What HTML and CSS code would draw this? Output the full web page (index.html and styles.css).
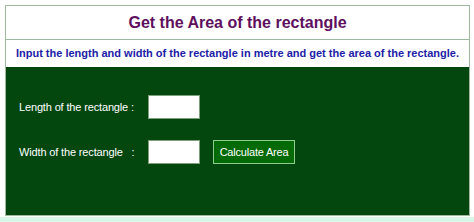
FILE: index.html
```html
<!DOCTYPE html>
<html lang="en">
<head>
    <meta charset="UTF-8">
    <title>Area of the rectangle</title>
    <link rel="stylesheet" href="styles.css">
</head>
<body>
    <div class="wrap">
        <div class="box">
            <h1 class="title">Get the Area of the rectangle</h1>
            <p class="intro">Input the length and width of the rectangle in metre and get the area of the rectangle.</p>
            <div class="panel">
                <div class="row">
                    <label class="lbl" for="len">Length of the rectangle :</label>
                    <input type="text" id="len">
                </div>
                <div class="row">
                    <label class="lbl" for="wid">Width of the rectangle &nbsp;&nbsp;:</label>
                    <input type="text" id="wid">
                    <button class="calc">Calculate Area</button>
                </div>
            </div>
        </div>
    </div>
    <div class="foot"></div>
</body>
</html>
```

FILE: styles.css
```css
body { margin: 0; font-family: "Liberation Sans", Arial, sans-serif; background: #fff; }
.wrap { padding: 5px 4px 0 5px; }
.box { border: 1px solid #9fb99f; background: #fff; }
.title { margin: 0; height: 33px; line-height: 33px; text-align: center; font-size: 16px; font-weight: bold; color: #5e0f5e; border-bottom: 1px solid #9fb99f; }
.intro { margin: 0; height: 27px; line-height: 27px; text-align: center; font-size: 11px; font-weight: bold; color: #2121a8; white-space: nowrap; }
.panel { background: #03470f; height: 148px; padding: 28px 0 0 13px; box-sizing: border-box; }
.row { display: flex; align-items: center; margin-bottom: 21px; }
.lbl { flex: 0 0 129px; color: #fff; font-size: 11px; letter-spacing: -0.15px; white-space: pre; }
.row input { width: 52px; height: 24px; box-sizing: border-box; border: 1px solid #7fa07f; padding: 2px; margin: 0; background: #fff; }
.calc { margin-left: 13px; height: 24px; width: 82px; padding: 0; background: #046a06; color: #fff; border: 1px solid #8fca8f; font-family: "Liberation Sans", Arial, sans-serif; font-size: 11px; letter-spacing: -0.2px; white-space: nowrap; }
.foot { height: 6px; margin-top: 1px; background: #d9f7e8; }
```
